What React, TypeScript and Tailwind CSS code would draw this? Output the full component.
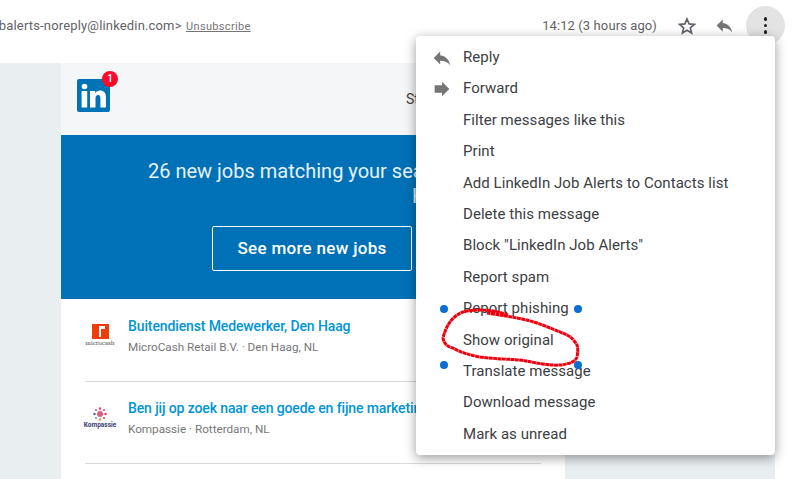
const items = ["Filter messages like this","Print","Add LinkedIn Job Alerts to Contacts list","Delete this message",'Block "LinkedIn Job Alerts"',"Report spam","Report phishing","Show original","Translate message","Download message","Mark as unread"];

function MenuItem({ label, icon }: { label: string; icon?: React.ReactNode }) {
  return (
    <div className="h-[31.4px] pl-[47px] relative flex items-center text-[15px] tracking-[0.05px] text-[#3c4043] whitespace-nowrap">
      {icon && <span className="absolute left-[15px] top-[5px] flex">{icon}</span>}
      {label}
    </div>
  );
}

const ReplyIcon = ({ size = 22 }: { size?: number }) => (
  <svg width={size} height={size} viewBox="0 0 24 24" fill="#757575"><path d="M10 9V5l-7 7 7 7v-4.1c5 0 8.5 1.6 11 5.1-1-5-4-10-11-11z" /></svg>
);
const ForwardIcon = () => (
  <svg width={22} height={22} viewBox="0 0 24 24" fill="#757575"><path d="M12 8V4l8 8-8 8v-4H4V8z" /></svg>
);

export default function App() {
  return (
    <div className="w-[792px] h-[479px] overflow-hidden bg-white relative" style={{ fontFamily: "Roboto, sans-serif" }}>
      <header className="h-[63px] flex items-start">
        <div className="pt-[17px] ml-[-12px] text-[13px] leading-[17px] tracking-[0.16px] text-[#5f6368] whitespace-nowrap">
          jobalerts-noreply@linkedin.com&gt; <span className="ml-[1px] text-[11px] tracking-[0.33px] underline text-[#757575]">Unsubscribe</span>
        </div>
        <div className="ml-auto flex items-center h-[39px] mt-[6px] mr-[7px]">
          <span className="text-[13px] text-[#5f6368] whitespace-nowrap tracking-[0.1px] mr-[20px]">14:12 (3 hours ago)</span>
          <svg className="mr-[17px]" width="20" height="20" viewBox="0 0 24 24" fill="none" stroke="#5f6368" strokeWidth="2"><path d="M12 3.6l2.5 5.9 6.4.5-4.9 4.2 1.5 6.2L12 17.1l-5.5 3.3L8 14.2 3.1 10l6.4-.5z" /></svg>
          <span className="mr-[11px] flex"><ReplyIcon size={21} /></span>
          <div className="relative w-[39px] h-[39px] rounded-full bg-[#e3e3e3] flex flex-col items-center justify-center gap-[3px]">
            <i className="w-[3.5px] h-[3.5px] rounded-full bg-[#202124]" />
            <i className="w-[3.5px] h-[3.5px] rounded-full bg-[#202124]" />
            <i className="w-[3.5px] h-[3.5px] rounded-full bg-[#202124]" />
          </div>
        </div>
      </header>

      <main className="flex h-[416px] w-[775px]">
        <div className="w-[61px] bg-[#e9eef1]" />
        <div className="w-[504px] bg-white overflow-hidden">
          <div className="h-[72px] bg-[#f4f6f8] flex items-center relative">
            <div className="ml-[16px] mt-[-8px] w-[33px] h-[33px] bg-[#0073b7] rounded-[2px] relative flex items-center justify-center">
              <svg width="33" height="33" viewBox="0 0 33 33" fill="#fff"><circle cx="7.5" cy="7.5" r="2.8" /><rect x="4.6" y="12" width="5.6" height="16.5" /><path d="M13 12h5.2v2.2c1-1.6 2.6-2.6 4.7-2.6 4 0 6 2.5 6 6.4v10.5h-5.5v-9.3c0-2-.6-3.3-2.3-3.3-1.9 0-2.6 1.4-2.6 3.4v9.2H13z" /></svg>
              <span className="absolute right-[-8px] top-[-8px] w-[16px] h-[16px] rounded-full bg-[#fb0a2a] text-white text-[10px] font-medium flex items-center justify-center">1</span>
            </div>
            <span className="ml-[296px] text-[14px] text-[#444]">St</span>
          </div>
          <div className="h-[164px] bg-[#0071b7] pt-[23px] whitespace-nowrap">
            <div className="pl-[87px] text-[20px] leading-[26px] text-[#e8f2f8]">26 new jobs matching your search</div>
            <div className="pl-[351px] text-[20px] leading-[24px] text-[#e8f2f8]">Holland</div>
            <div className="mt-[18px] ml-[151px] w-[200px] h-[45px] border border-white rounded-[2px] text-white text-[17px] tracking-[0.3px] font-medium flex items-center justify-center">See more new jobs</div>
          </div>
          <div className="px-[24px] whitespace-nowrap">
            <div className="h-[82.5px] border-b border-[#d9d9d9] flex">
              <div className="w-[30px] flex flex-col items-center mt-[25px]">
                <div className="w-[17px] h-[15px] bg-[#f03c0a] flex items-start justify-center pt-[2px]"><svg width="9" height="11" viewBox="0 0 9 11" fill="#fff"><path d="M3 0h6v3H5v8H3z" /></svg></div>
                <span className="mt-[1px] text-[7px] leading-[7px] font-serif text-[#555]">microcash</span>
              </div>
              <div className="ml-[13px]">
                <div className="mt-[18px] text-[14px] tracking-[-0.12px] leading-[18px] font-medium text-[#0095d5]">Buitendienst Medewerker, Den Haag</div>
                <div className="mt-[4px] text-[11.7px] leading-[16px] text-[#777]">MicroCash Retail B.V. · Den Haag, NL</div>
              </div>
            </div>
            <div className="h-[82px] border-b border-[#d9d9d9] flex">
              <div className="w-[30px] flex flex-col items-center mt-[25px]">
                <svg width="14" height="14" viewBox="0 0 14 14"><circle cx="7" cy="7" r="3" fill="#d8607a" /><circle cx="7" cy="1.5" r="1.3" fill="#e84a5f" /><circle cx="12.5" cy="7" r="1.3" fill="#e84a5f" /><circle cx="7" cy="12.5" r="1.3" fill="#f29c38" /><circle cx="1.5" cy="7" r="1.3" fill="#4a6fb5" /><circle cx="3" cy="3" r="1.1" fill="#e05090" /><circle cx="11" cy="3" r="1.1" fill="#e05090" /><circle cx="3" cy="11" r="1.1" fill="#4aa0d5" /><circle cx="11" cy="11" r="1.1" fill="#e84a5f" /></svg>
                <span className="mt-[1px] text-[6.5px] leading-[7px] font-bold text-[#33406e]">Kompassie</span>
              </div>
              <div className="ml-[13px]">
                <div className="mt-[17.5px] text-[14px] tracking-[-0.12px] leading-[18px] font-medium text-[#0095d5]">Ben jij op zoek naar een goede en fijne marketing</div>
                <div className="mt-[4px] text-[11.7px] leading-[16px] text-[#777]">Kompassie · Rotterdam, NL</div>
              </div>
            </div>
          </div>
        </div>
        <div className="flex-1 bg-[#e9eef1]" />
      </main>

      <nav className="absolute left-[416px] top-[36px] w-[359px] h-[419px] bg-white rounded-[4px] pt-[5.6px] shadow-[0_3px_12px_rgba(0,0,0,0.4)]">
        <MenuItem label="Reply" icon={<ReplyIcon />} />
        <MenuItem label="Forward" icon={<ForwardIcon />} />
        {items.map((l) => <MenuItem key={l} label={l} />)}
      </nav>

      <svg className="absolute left-0 top-0 pointer-events-none" width="792" height="479" fill="none">
        <circle cx="444" cy="309" r="4" fill="#0a6fd0" />
        <circle cx="578" cy="309" r="4" fill="#0a6fd0" />
        <circle cx="444" cy="365" r="4" fill="#0a6fd0" />
        <circle cx="578" cy="365" r="4" fill="#0a6fd0" />
        <path d="M508 315C492 309 474 309 463 312C452 316 446 326 443 338C444 344 448 347 453 348C462 353 470 355 480 357C495 359 508 359 520 360C533 362 548 366 560 365C570 364 576 361 577 357C578 352 578 348 577 345C574 340 571 337 567 335C558 331 548 327 537 323C522 318 505 316 487 313" stroke="#f0000f" strokeWidth="3" strokeDasharray="4 0.4" />
      </svg>
    </div>
  );
}
